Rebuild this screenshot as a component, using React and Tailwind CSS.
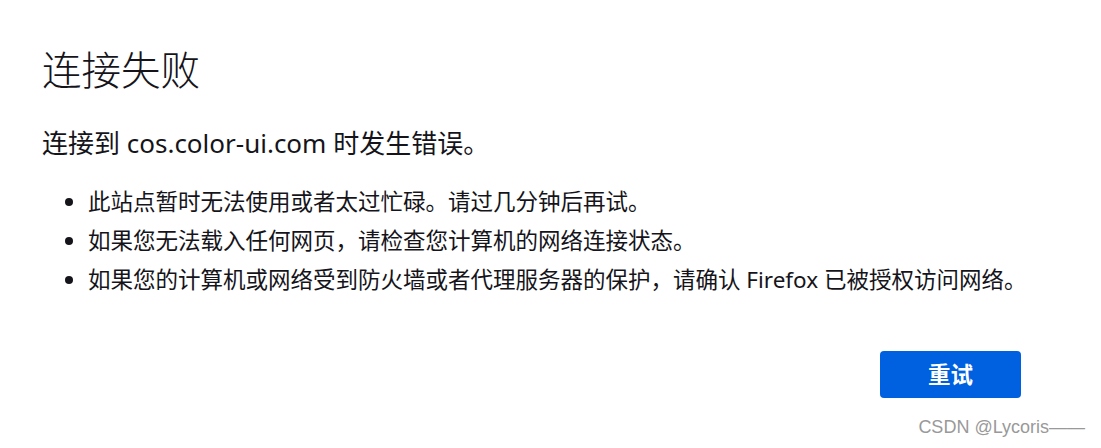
export default function App() {
    const items = [
        '此站点暂时无法使用或者太过忙碌。请过几分钟后再试。',
        '如果您无法载入任何网页，请检查您计算机的网络连接状态。',
        '如果您的计算机或网络受到防火墙或者代理服务器的保护，请确认 Firefox 已被授权访问网络。',
    ];

    return (
        <main className="relative w-[1101px] h-[448px] bg-white text-[#15141a] font-['Noto_Sans','Noto_Sans_CJK_SC',sans-serif] overflow-hidden">
            <div className="pl-[42px] pt-[44px] pr-[80px]">
                <h1 className="text-[39.5px] leading-[52px] font-light">连接失败</h1>

                <p className="mt-[28px] text-[26px] leading-[38px]">连接到 cos.color-ui.com 时发生错误。</p>

                <ul className="mt-[20px] pl-[46px] list-disc text-[22.5px] leading-[39px] whitespace-nowrap">
                    {items.map((item) => (
                        <li key={item}>{item}</li>
                    ))}
                </ul>

                <div className="mt-[52px] flex justify-end">
                    <button className="w-[141px] h-[47px] rounded-[4px] bg-[#0061e0] text-white text-[22.5px] font-bold">
                        重试
                    </button>
                </div>
            </div>

            <div className="absolute right-[16px] bottom-[7px] text-[18px] text-[#999] font-['Liberation_Sans',sans-serif]">
                CSDN @Lycoris——
            </div>
        </main>
    );
}
